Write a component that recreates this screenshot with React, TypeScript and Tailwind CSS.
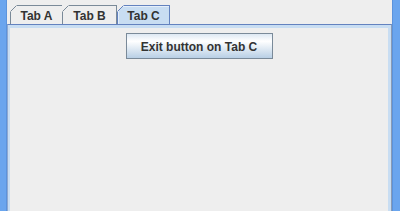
import React from "react";

function Tab({ label, selected, extra }: { label: string; selected?: boolean; extra?: string }) {
  const stroke = selected ? "#6382bf" : "#7a8a99";
  return (
    <div
      className={`relative h-[19px] flex items-center justify-center border-t border-l border-r text-[12px] font-bold text-[#333333] leading-none ${
        selected
          ? "bg-[#c8ddf2] border-[#6382bf] shadow-[inset_1px_1px_0_#e4eefa]"
          : "bg-[#eeeeee] border-[#7a8a99]"
      } ${extra ?? ""}`}
    >
      <svg className="absolute -left-px -top-px" width="7" height="7" viewBox="0 0 7 7">
        <polygon points="0,0 7,0 7,0.5 0.5,7 0,7" fill="#eeeeee" />
        <line x1="0.5" y1="6.5" x2="6.5" y2="0.5" stroke={stroke} strokeWidth="1" />
      </svg>
      <span className="pt-px">{label}</span>
    </div>
  );
}

export default function App() {
  return (
    <div
      className="w-[400px] h-[211px] flex bg-[#6aa5ee] overflow-hidden"
      style={{ fontFamily: '"Liberation Sans", Arial, sans-serif' }}
    >
      <div className="w-[7px] h-full bg-[#6aa5ee] border-r border-[#5b93dc]" />
      <div className="flex-1 flex flex-col bg-[#eeeeee]">
        <div className="h-[24px] flex items-end pl-[3px]">
          <Tab label="Tab A" extra="w-[53px]" />
          <Tab label="Tab B" extra="w-[55px] -ml-px" />
          <Tab label="Tab C" selected extra="w-[53px]" />
        </div>
        <div className="flex-1 flex flex-col border-t border-l border-r border-t-[#6382bf] border-l-[#8fa8d0] border-r-[#8a9bb4] bg-[#c8ddf2] pt-[3px] pl-[2px] pr-[3px]">
          <div className="flex-1 bg-[#eeeeee] flex justify-center items-start pt-[5px]">
            <button className="w-[147px] h-[26px] border border-[#7a8a99] bg-[linear-gradient(to_bottom,#dde8f3_0%,#ffffff_30%,#b8cfe5_100%)] text-[12px] font-bold text-[#333333] leading-none flex items-center justify-center">
              <span className="pt-px">Exit button on Tab C</span>
            </button>
          </div>
        </div>
      </div>
      <div className="w-[8px] h-full bg-[#6aa5ee] border-l border-[#5b93dc]" />
    </div>
  );
}
